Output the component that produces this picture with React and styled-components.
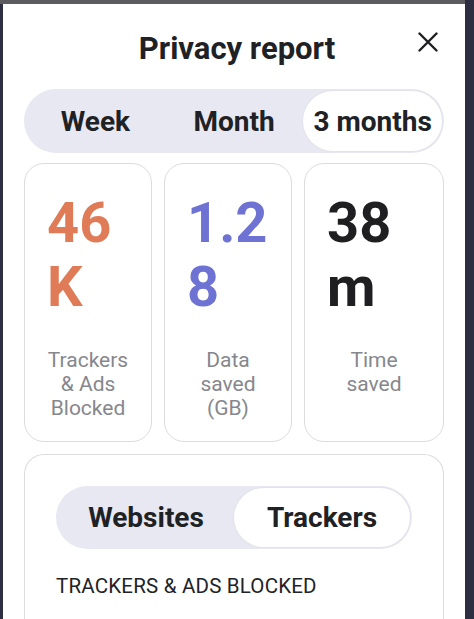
import React from "react";
import styled, { createGlobalStyle } from "styled-components";

const GlobalStyle = createGlobalStyle`
  html, body {
    margin: 0;
    padding: 0;
    background: #2d2e42;
    font-family: Roboto, "Noto Sans", sans-serif;
  }
`;

const TopBar = styled.div`
  height: 4px;
  width: 465px;
  background: #5c5c60;
`;

const Sheet = styled.div`
  margin-left: 3px;
  width: 462px;
  height: 615px;
  background: #fff;
  box-sizing: border-box;
  padding: 0 21px;
  overflow: hidden;
`;

const Header = styled.div`
  position: relative;
  display: flex;
  justify-content: center;
  padding-top: 27px;
  height: 36px;
  margin-bottom: 22px;
`;

const Title = styled.h1`
  margin: 0 0 0 6px;
  font-size: 31px;
  line-height: 36px;
  font-weight: 700;
  color: #202124;
`;

const CloseButton = styled.button`
  position: absolute;
  right: 2px;
  top: 24px;
  width: 28px;
  height: 28px;
  padding: 0;
  border: 0;
  background: none;
  display: flex;
  align-items: center;
  justify-content: center;
`;

const Segmented = styled.div`
  display: grid;
  grid-template-columns: repeat(${(p) => p.count}, 1fr);
  background: #e8e8f2;
  border-radius: 32px;
  padding: 2px;
  height: ${(p) => p.height}px;
  box-sizing: border-box;
`;

const Segment = styled.div`
  display: flex;
  align-items: center;
  justify-content: center;
  border-radius: 30px;
  font-size: 28px;
  font-weight: 700;
  color: #202124;
  background: ${(p) => (p.active ? "#fff" : "transparent")};
  ${(p) => p.active && "box-shadow: 0 0 0 1px #e2e2ea;"}
`;

const StatsGrid = styled.div`
  display: grid;
  grid-template-columns: 128px 128px 1fr;
  gap: 12px;
  margin-top: 10px;
`;

const StatCard = styled.div`
  border: 1.5px solid #dcdcdf;
  border-radius: 20px;
  padding: 27px 0 22px 22px;
  display: flex;
  flex-direction: column;
  height: 279px;
  box-sizing: border-box;
`;

const StatValue = styled.div`
  font-size: 56px;
  line-height: 64px;
  font-weight: 700;
  color: ${(p) => p.color};
`;

const StatLabel = styled.div`
  margin-top: 29px;
  margin-left: -22px;
  font-size: 21px;
  line-height: 24px;
  color: #86878d;
  text-align: center;
`;

const ListCard = styled.div`
  margin-top: 12px;
  border: 1.5px solid #dcdcdf;
  border-bottom: 0;
  border-radius: 20px 20px 0 0;
  padding: 31px 31px 0 31px;
  height: 200px;
`;

const SectionLabel = styled.div`
  margin-top: 25px;
  font-size: 20.5px;
  line-height: 24px;
  color: #222327;
  letter-spacing: 0.2px;
`;

const stats = [
  { value: ["46", "K"], color: "#e07b58", label: ["Trackers", "& Ads", "Blocked"] },
  { value: ["1.2", "8"], color: "#6e72d2", label: ["Data", "saved", "(GB)"] },
  { value: ["38", "m"], color: "#1f1f22", label: ["Time", "saved"] },
];

const Lines = ({ lines }) =>
  lines.map((line, i) => (
    <React.Fragment key={i}>
      {i > 0 && <br />}
      {line}
    </React.Fragment>
  ));

const CloseIcon = () => (
  <svg width="20" height="20" viewBox="0 0 20 20">
    <path
      d="M1.5 1.5 L18.5 18.5 M18.5 1.5 L1.5 18.5"
      stroke="#1f1f22"
      strokeWidth="2.4"
      strokeLinecap="round"
      fill="none"
    />
  </svg>
);

export default function App() {
  return (
    <>
      <GlobalStyle />
      <TopBar />
      <Sheet>
        <Header>
          <Title>Privacy report</Title>
          <CloseButton aria-label="Close">
            <CloseIcon />
          </CloseButton>
        </Header>

        <Segmented count={3} height={64}>
          <Segment>Week</Segment>
          <Segment>Month</Segment>
          <Segment active>3 months</Segment>
        </Segmented>

        <StatsGrid>
          {stats.map((s) => (
            <StatCard key={s.label.join(" ")}>
              <StatValue color={s.color}>
                <Lines lines={s.value} />
              </StatValue>
              <StatLabel>
                <Lines lines={s.label} />
              </StatLabel>
            </StatCard>
          ))}
        </StatsGrid>

        <ListCard>
          <Segmented count={2} height={63}>
            <Segment>Websites</Segment>
            <Segment active>Trackers</Segment>
          </Segmented>
          <SectionLabel>TRACKERS &amp; ADS BLOCKED</SectionLabel>
        </ListCard>
      </Sheet>
    </>
  );
}
